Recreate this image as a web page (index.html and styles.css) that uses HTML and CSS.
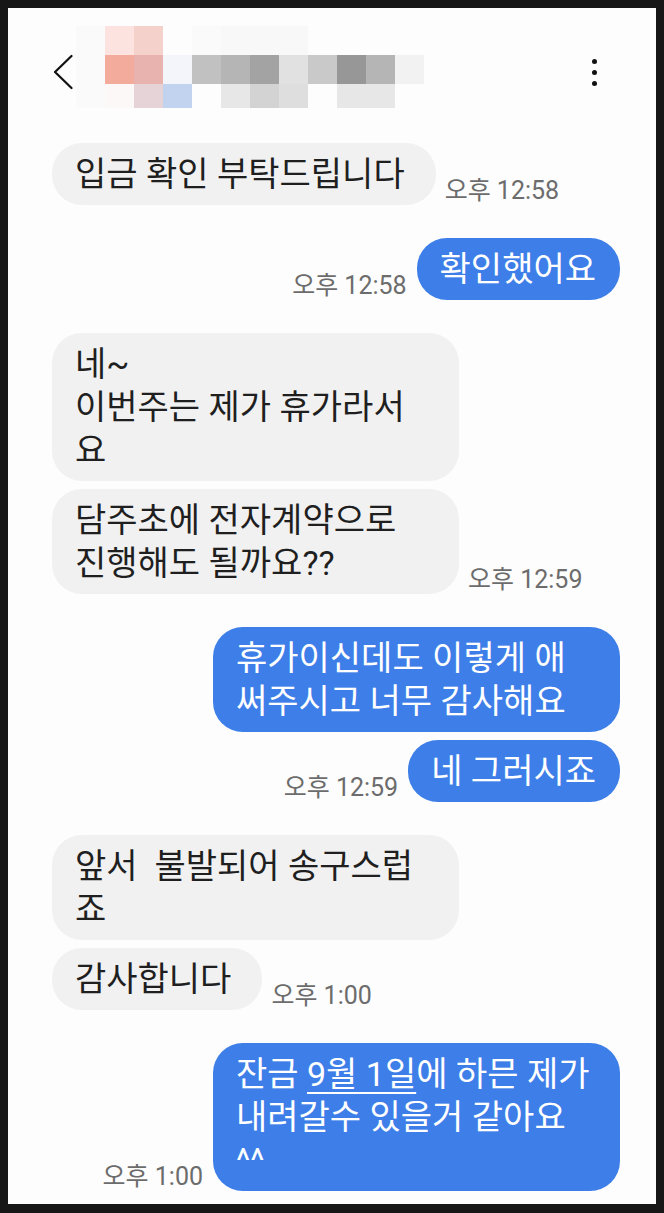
FILE: index.html
```html
<!DOCTYPE html>
<html lang="ko">
<head>
    <meta charset="utf-8">
    <meta name="viewport" content="width=device-width, initial-scale=1.0">
    <title>메시지</title>
    <link rel="stylesheet" href="styles.css">
</head>
<body>
    <div class="screen">
        <div class="topbar">
            <svg class="back" width="20" height="36" viewBox="0 0 20 36">
                <polyline points="18.5,2 2,18 18.5,34" fill="none" stroke="#111" stroke-width="2.2" stroke-linecap="round" stroke-linejoin="round"/>
            </svg>
            <!-- blurred contact name -->
            <div class="mosaic">
                <span class="w2"></span><span class="p1"></span><span class="p2"></span><span class="w1"></span><span class="w2"></span><span class="w3"></span><span class="w3"></span><span class="w3"></span><span class="w1"></span><span class="w1"></span><span class="w1"></span><span class="w1"></span>
                <span class="w2"></span><span class="p3"></span><span class="p4"></span><span class="b1"></span><span class="g3"></span><span class="g4"></span><span class="g5"></span><span class="g1"></span><span class="g2"></span><span class="g6"></span><span class="g4"></span><span class="w4"></span>
                <span class="w2"></span><span class="p0"></span><span class="p5"></span><span class="b2"></span><span class="w1"></span><span class="l1"></span><span class="l3"></span><span class="l2"></span><span class="w1"></span><span class="l1"></span><span class="l1"></span><span class="w1"></span>
            </div>
            <div class="menu">
                <i></i><i></i><i></i>
            </div>
        </div>

        <div class="chat">
            <div class="row in">
                <div class="bubble">입금 확인 부탁드립니다</div>
                <span class="time">오후 12:58</span>
            </div>
            <div class="row out">
                <span class="time">오후 12:58</span>
                <div class="bubble">확인했어요</div>
            </div>
            <div class="row in">
                <div class="bubble wide">네~<br>이번주는 제가 휴가라서<br>요</div>
            </div>
            <div class="row in cont">
                <div class="bubble wide">담주초에 전자계약으로<br>진행해도 될까요??</div>
                <span class="time">오후 12:59</span>
            </div>
            <div class="row out">
                <div class="bubble wide">휴가이신데도 이렇게 애<br>써주시고 너무 감사해요</div>
            </div>
            <div class="row out cont">
                <span class="time">오후 12:59</span>
                <div class="bubble">네 그러시죠</div>
            </div>
            <div class="row in">
                <div class="bubble wide">앞서 &nbsp;불발되어 송구스럽<br>죠</div>
            </div>
            <div class="row in cont">
                <div class="bubble">감사합니다</div>
                <span class="time">오후 1:00</span>
            </div>
            <div class="row out">
                <span class="time">오후 1:00</span>
                <div class="bubble wide">잔금 <u>9월 1일</u>에 하믄 제가<br>내려갈수 있을거 같아요<br>^^</div>
            </div>
        </div>
    </div>
</body>
</html>
```

FILE: styles.css
```css
*{
    margin: 0;
    padding: 0;
    box-sizing: border-box;
}
body{
    width: 664px;
    height: 1213px;
    padding: 8px 8px 9px 8px;
    background-color: #171717;
    font-family: Roboto, "Noto Sans CJK KR", sans-serif;
    overflow: hidden;
}
.screen{
    width: 648px;
    height: 1196px;
    background-color: #fdfdfd;
    overflow: hidden;
}

/* header */
.topbar{
    display: flex;
    align-items: center;
    height: 128px;
    padding-left: 45px;
}
.back{
    display: block;
    flex-shrink: 0;
}
.mosaic{
    align-self: flex-start;
    margin-top: 18px;
    margin-left: 3px;
    display: grid;
    grid-template-columns: repeat(12, 29px);
    grid-template-rows: 29px 29px 24px;
}
.mosaic .w1{ background-color: #fdfdfd; }
.mosaic .w2{ background-color: #fafafa; }
.mosaic .w3{ background-color: #f8f8f8; }
.mosaic .w4{ background-color: #f2f2f2; }
.mosaic .p0{ background-color: #fcf8f8; }
.mosaic .p1{ background-color: #fce3df; }
.mosaic .p2{ background-color: #f5d1cc; }
.mosaic .p3{ background-color: #f3ab9b; }
.mosaic .p4{ background-color: #e8b3af; }
.mosaic .p5{ background-color: #e6d3d7; }
.mosaic .b1{ background-color: #f3f5fa; }
.mosaic .b2{ background-color: #c1d3ee; }
.mosaic .g1{ background-color: #e1e1e1; }
.mosaic .g2{ background-color: #c9c9c9; }
.mosaic .g3{ background-color: #c1c1c1; }
.mosaic .g4{ background-color: #b5b5b5; }
.mosaic .g5{ background-color: #a3a3a3; }
.mosaic .g6{ background-color: #979797; }
.mosaic .l1{ background-color: #e7e7e7; }
.mosaic .l2{ background-color: #dedede; }
.mosaic .l3{ background-color: #d3d3d3; }
.menu{
    margin-left: auto;
    margin-right: 59px;
    display: flex;
    flex-direction: column;
    gap: 6px;
}
.menu i{
    display: block;
    width: 5px;
    height: 5px;
    border-radius: 50%;
    background-color: #111;
}

/* messages */
.chat{
    padding: 7px 36px 0 44px;
}
.row{
    display: flex;
    align-items: flex-end;
    margin-top: 33px;
}
.row:first-child{
    margin-top: 0;
}
.row.cont{
    margin-top: 8px;
}
.row.out{
    justify-content: flex-end;
}
.bubble{
    padding: 10px 24px 9px 23px;
    font-size: 34px;
    line-height: 43px;
    border-radius: 30px;
    white-space: nowrap;
}
.bubble.wide{
    width: 407px;
}
.in .bubble{
    padding-right: 31px;
    background-color: #f1f1f1;
    color: #1f1f1f;
}
.out .bubble{
    background-color: #3d7ee8;
    color: #ffffff;
}
.bubble u{
    text-underline-offset: 6px;
    text-decoration-thickness: 2px;
}
.time{
    font-size: 25px;
    line-height: 29px;
    color: #6c6c6c;
    white-space: nowrap;
}
.in .time{
    margin-left: 9px;
}
.out .time{
    margin-right: 10px;
}
```
